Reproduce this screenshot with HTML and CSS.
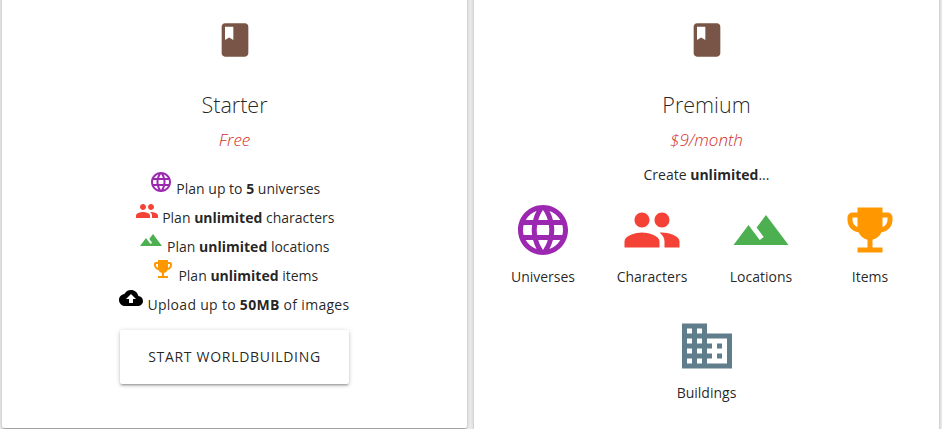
FILE: index.html
```html
<!DOCTYPE html>
<html lang="en">
<head>
    <meta charset="UTF-8">
    <meta name="viewport" content="width=device-width, initial-scale=1.0">
    <title>Pricing</title>
    <link rel="stylesheet" href="styles.css">
</head>
<body>
    <div class="plans">
        <div class="plan-card">
            <svg class="plan-icon" viewBox="0 0 24 24"><path d="M18 2H6c-1.1 0-2 .9-2 2v16c0 1.1.9 2 2 2h12c1.1 0 2-.9 2-2V4c0-1.1-.9-2-2-2zM6 4h5v8l-2.5-1.5L6 12V4z"/></svg>
            <h2>Starter</h2>
            <p class="price">Free</p>
            <ul class="features">
                <li><svg class="icon purple" viewBox="0 0 24 24"><path d="M11.99 2C6.47 2 2 6.48 2 12s4.47 10 9.99 10C17.52 22 22 17.52 22 12S17.52 2 11.99 2zm6.93 6h-2.95c-.32-1.25-.78-2.45-1.38-3.56 1.84.63 3.37 1.91 4.33 3.56zM12 4.04c.83 1.2 1.48 2.53 1.91 3.96h-3.82c.43-1.43 1.08-2.76 1.91-3.96zM4.26 14C4.1 13.36 4 12.69 4 12s.1-1.36.26-2h3.38c-.08.66-.14 1.32-.14 2 0 .68.06 1.34.14 2H4.26zm.82 2h2.95c.32 1.25.78 2.45 1.38 3.56-1.84-.63-3.37-1.9-4.33-3.56zm2.95-8H5.08c.96-1.66 2.49-2.93 4.33-3.56C8.81 5.55 8.35 6.75 8.03 8zM12 19.96c-.83-1.2-1.48-2.53-1.91-3.96h3.82c-.43 1.43-1.08 2.76-1.91 3.96zM14.34 14H9.66c-.09-.66-.16-1.32-.16-2 0-.68.07-1.35.16-2h4.68c.09.65.16 1.32.16 2 0 .68-.07 1.34-.16 2zm.25 5.56c.6-1.11 1.06-2.31 1.38-3.56h2.95c-.96 1.65-2.49 2.93-4.33 3.56zM16.36 14c.08-.66.14-1.32.14-2 0-.68-.06-1.34-.14-2h3.38c.16.64.26 1.31.26 2s-.1 1.36-.26 2h-3.38z"/></svg> Plan up to <b>5</b> universes</li>
                <li><svg class="icon red" viewBox="0 0 24 24"><path d="M16 11c1.66 0 2.99-1.34 2.99-3S17.66 5 16 5c-1.66 0-3 1.34-3 3s1.34 3 3 3zm-8 0c1.66 0 2.99-1.34 2.99-3S9.66 5 8 5C6.34 5 5 6.34 5 8s1.34 3 3 3zm0 2c-2.33 0-7 1.17-7 3.5V19h14v-2.5c0-2.33-4.67-3.5-7-3.5zm8 0c-.29 0-.62.02-.97.05 1.16.84 1.97 1.97 1.97 3.45V19h6v-2.5c0-2.33-4.67-3.5-7-3.5z"/></svg> Plan <b>unlimited</b> characters</li>
                <li><svg class="icon green" viewBox="0 0 24 24"><path d="M14 6l-3.75 5 2.85 3.8-1.6 1.2C9.81 13.75 7 10 7 10l-6 8h22L14 6z"/></svg> Plan <b>unlimited</b> locations</li>
                <li><svg class="icon orange" viewBox="0 0 24 24"><path d="M19 5h-2V3H7v2H5c-1.1 0-2 .9-2 2v1c0 2.55 1.92 4.63 4.39 4.94.63 1.5 1.98 2.63 3.61 2.96V19H7v2h10v-2h-4v-3.1c1.63-.33 2.98-1.46 3.61-2.96C19.08 12.63 21 10.55 21 8V7c0-1.1-.9-2-2-2zM5 8V7h2v3.82C5.84 10.4 5 9.3 5 8zm14 0c0 1.3-.84 2.4-2 2.82V7h2v1z"/></svg> Plan <b>unlimited</b> items</li>
                <li class="upload"><svg class="icon" viewBox="0 0 24 24"><path d="M19.35 10.04C18.67 6.59 15.64 4 12 4 9.11 4 6.6 5.64 5.35 8.04 2.34 8.36 0 10.91 0 14c0 3.31 2.69 6 6 6h13c2.76 0 5-2.24 5-5 0-2.64-2.05-4.78-4.65-4.96zM14 13v4h-4v-4H7l5-5 5 5h-3z"/></svg> Upload up to <b>50MB</b> of images</li>
            </ul>
            <a class="btn" href="#">Start Worldbuilding</a>
        </div>
        <div class="plan-card plan-card-tall">
            <svg class="plan-icon" viewBox="0 0 24 24"><path d="M18 2H6c-1.1 0-2 .9-2 2v16c0 1.1.9 2 2 2h12c1.1 0 2-.9 2-2V4c0-1.1-.9-2-2-2zM6 4h5v8l-2.5-1.5L6 12V4z"/></svg>
            <h2>Premium</h2>
            <p class="price">$9/month</p>
            <p class="lead">Create <b>unlimited</b>...</p>
            <div class="types">
                <div class="type"><svg class="icon-lg purple" viewBox="0 0 24 24"><path d="M11.99 2C6.47 2 2 6.48 2 12s4.47 10 9.99 10C17.52 22 22 17.52 22 12S17.52 2 11.99 2zm6.93 6h-2.95c-.32-1.25-.78-2.45-1.38-3.56 1.84.63 3.37 1.91 4.33 3.56zM12 4.04c.83 1.2 1.48 2.53 1.91 3.96h-3.82c.43-1.43 1.08-2.76 1.91-3.96zM4.26 14C4.1 13.36 4 12.69 4 12s.1-1.36.26-2h3.38c-.08.66-.14 1.32-.14 2 0 .68.06 1.34.14 2H4.26zm.82 2h2.95c.32 1.25.78 2.45 1.38 3.56-1.84-.63-3.37-1.9-4.33-3.56zm2.95-8H5.08c.96-1.66 2.49-2.93 4.33-3.56C8.81 5.55 8.35 6.75 8.03 8zM12 19.96c-.83-1.2-1.48-2.53-1.91-3.96h3.82c-.43 1.43-1.08 2.76-1.91 3.96zM14.34 14H9.66c-.09-.66-.16-1.32-.16-2 0-.68.07-1.35.16-2h4.68c.09.65.16 1.32.16 2 0 .68-.07 1.34-.16 2zm.25 5.56c.6-1.11 1.06-2.31 1.38-3.56h2.95c-.96 1.65-2.49 2.93-4.33 3.56zM16.36 14c.08-.66.14-1.32.14-2 0-.68-.06-1.34-.14-2h3.38c.16.64.26 1.31.26 2s-.1 1.36-.26 2h-3.38z"/></svg><span>Universes</span></div>
                <div class="type"><svg class="icon-lg red" viewBox="0 0 24 24"><path d="M16 11c1.66 0 2.99-1.34 2.99-3S17.66 5 16 5c-1.66 0-3 1.34-3 3s1.34 3 3 3zm-8 0c1.66 0 2.99-1.34 2.99-3S9.66 5 8 5C6.34 5 5 6.34 5 8s1.34 3 3 3zm0 2c-2.33 0-7 1.17-7 3.5V19h14v-2.5c0-2.33-4.67-3.5-7-3.5zm8 0c-.29 0-.62.02-.97.05 1.16.84 1.97 1.97 1.97 3.45V19h6v-2.5c0-2.33-4.67-3.5-7-3.5z"/></svg><span>Characters</span></div>
                <div class="type"><svg class="icon-lg green" viewBox="0 0 24 24"><path d="M14 6l-3.75 5 2.85 3.8-1.6 1.2C9.81 13.75 7 10 7 10l-6 8h22L14 6z"/></svg><span>Locations</span></div>
                <div class="type"><svg class="icon-lg orange" viewBox="0 0 24 24"><path d="M19 5h-2V3H7v2H5c-1.1 0-2 .9-2 2v1c0 2.55 1.92 4.63 4.39 4.94.63 1.5 1.98 2.63 3.61 2.96V19H7v2h10v-2h-4v-3.1c1.63-.33 2.98-1.46 3.61-2.96C19.08 12.63 21 10.55 21 8V7c0-1.1-.9-2-2-2zM5 8V7h2v3.82C5.84 10.4 5 9.3 5 8zm14 0c0 1.3-.84 2.4-2 2.82V7h2v1z"/></svg><span>Items</span></div>
                <div class="type"><svg class="icon-lg slate" viewBox="0 0 24 24"><path d="M12 7V3H2v18h20V7H12zM6 19H4v-2h2v2zm0-4H4v-2h2v2zm0-4H4V9h2v2zm0-4H4V5h2v2zm4 12H8v-2h2v2zm0-4H8v-2h2v2zm0-4H8V9h2v2zm0-4H8V5h2v2zm10 12h-8v-2h2v-2h-2v-2h2v-2h-2V9h8v10zm-2-8h-2v2h2v-2zm0 4h-2v2h2v-2z"/></svg><span>Buildings</span></div>
            </div>
        </div>
    </div>
</body>
</html>
```

FILE: styles.css
```css
* {
    box-sizing: border-box;
    margin: 0;
    padding: 0;
}

html, body {
    height: 429px;
    overflow: hidden;
}

body {
    font-family: "Open Sans", "Noto Sans", Arial, sans-serif;
    font-size: 14px;
    color: rgba(0,0,0,0.87);
    background: #f0f0f0;
}

.plans {
    display: grid;
    grid-template-columns: 465px 465px;
    column-gap: 7px;
    align-items: start;
    margin: -10px 0 0 2px;
}

.plan-card {
    height: 438px;
    padding-top: 30px;
    background: #fff;
    text-align: center;
    border-radius: 2px;
    box-shadow: 0 2px 2px 0 rgba(0,0,0,0.14), 0 3px 1px -2px rgba(0,0,0,0.12), 0 1px 5px 0 rgba(0,0,0,0.2);
}

.plan-card-tall {
    height: 460px;
}

.plan-icon {
    display: block;
    width: 40px;
    height: 40px;
    margin: 0 auto;
    fill: #795548;
}

.plan-card h2 {
    margin-top: 29px;
    font-size: 21.5px;
    font-weight: 300;
    line-height: 32px;
}

.price {
    margin-top: 3px;
    font-size: 17px;
    font-style: italic;
    font-weight: 300;
    line-height: 32px;
    color: #d32f2f;
}

.features {
    list-style: none;
    margin-top: 14px;
}

.features li {
    height: 29px;
}

.features .upload {
    letter-spacing: 0.3px;
}

.icon {
    width: 24px;
    height: 24px;
}

.icon-lg {
    display: block;
    width: 60px;
    height: 60px;
    margin: 0 auto 7px;
}

.purple { fill: #9c27b0; }
.red { fill: #f44336; }
.green { fill: #4caf50; }
.orange { fill: #ff9800; }
.slate { fill: #607d8b; }

.btn {
    display: block;
    width: 229px;
    height: 54px;
    margin: 15px auto 0;
    line-height: 54px;
    font-size: 14px;
    letter-spacing: 0.7px;
    text-transform: uppercase;
    text-decoration: none;
    color: rgba(0,0,0,0.87);
    background: #fff;
    border-radius: 2px;
    box-shadow: 0 2px 2px 0 rgba(0,0,0,0.14), 0 3px 1px -2px rgba(0,0,0,0.12), 0 1px 5px 0 rgba(0,0,0,0.2);
}

.lead {
    margin-top: 9px;
    line-height: 20px;
}

.types {
    display: flex;
    flex-wrap: wrap;
    justify-content: center;
    row-gap: 30px;
    margin-top: 15px;
}

.type {
    width: 109px;
}
```
